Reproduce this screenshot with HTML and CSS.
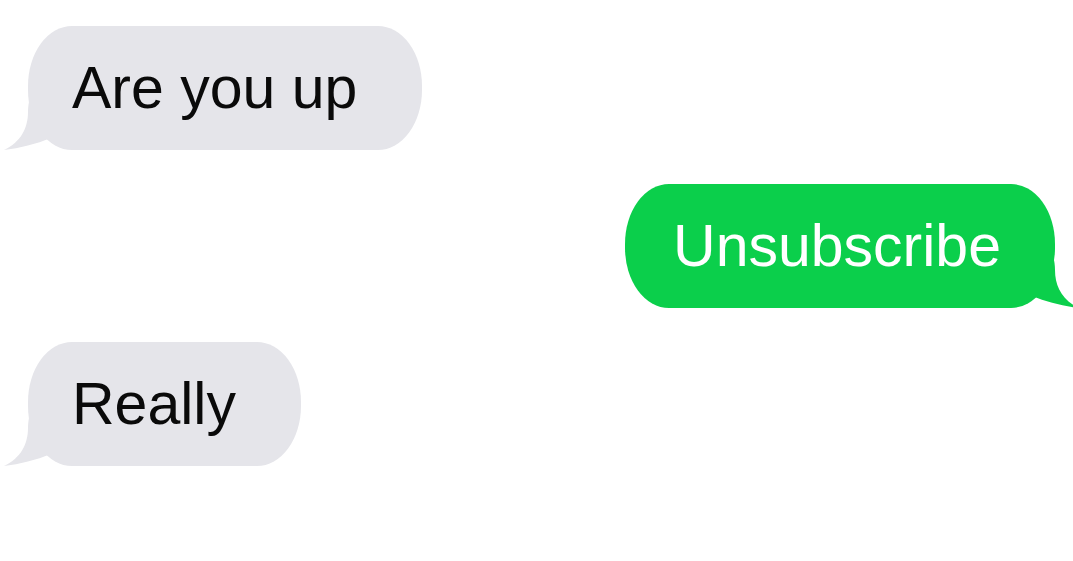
FILE: index.html
```html
<!DOCTYPE html>
<html lang="en">
<head>
<meta charset="utf-8">
<title>Messages</title>
<link rel="stylesheet" href="styles.css">
</head>
<body>
  <main class="thread">
    <div class="bubble received">
      <svg class="tail" viewBox="0 0 70 52" width="70" height="52" aria-hidden="true">
        <path d="M26 0 C24.6 5 24 9 24 14 C24 30 17 44 0 52 C16 50 32 46 47 40 L47 0 Z"/>
      </svg>
      <span class="text">Are you up</span>
    </div>
    <div class="bubble sent">
      <svg class="tail" viewBox="0 0 70 52" width="70" height="52" aria-hidden="true">
        <path d="M26 0 C24.6 5 24 9 24 14 C24 30 17 44 0 52 C16 50 32 46 47 40 L47 0 Z"/>
      </svg>
      <span class="text">Unsubscribe</span>
    </div>
    <div class="bubble received">
      <svg class="tail" viewBox="0 0 70 52" width="70" height="52" aria-hidden="true">
        <path d="M26 0 C24.6 5 24 9 24 14 C24 30 17 44 0 52 C16 50 32 46 47 40 L47 0 Z"/>
      </svg>
      <span class="text">Really</span>
    </div>
  </main>
</body>
</html>
```
FILE: styles.css
```css
html, body {
  margin: 0;
  padding: 0;
  background: #ffffff;
}

body {
  width: 1073px;
  height: 561px;
  overflow: hidden;
  font-family: "Liberation Sans", Arial, Helvetica, sans-serif;
}

.thread {
  display: flex;
  flex-direction: column;
  gap: 34px;
  padding: 26px 18px 0 28px;
}

.bubble {
  position: relative;
  height: 124px;
  line-height: 124px;
  font-size: 59px;
  border-radius: 44px / 60px;
  white-space: nowrap;
}

.bubble .text {
  position: relative;
}

/* tail sits at the bottom corner, drawn in the bubble colour */
.bubble .tail {
  position: absolute;
  bottom: 0;
  left: -24px;
  display: block;
}

.received {
  align-self: flex-start;
  background: #e5e5ea;
  color: #0a0a0a;
  padding: 0 65px 0 44px;
}

.received .tail path {
  fill: #e5e5ea;
}

.sent {
  align-self: flex-end;
  background: #0bcf4b;
  color: #ffffff;
  padding: 0 54px 0 48px;
}

.sent .tail {
  left: auto;
  right: -24px;
  transform: scaleX(-1);
}

.sent .tail path {
  fill: #0bcf4b;
}
```
